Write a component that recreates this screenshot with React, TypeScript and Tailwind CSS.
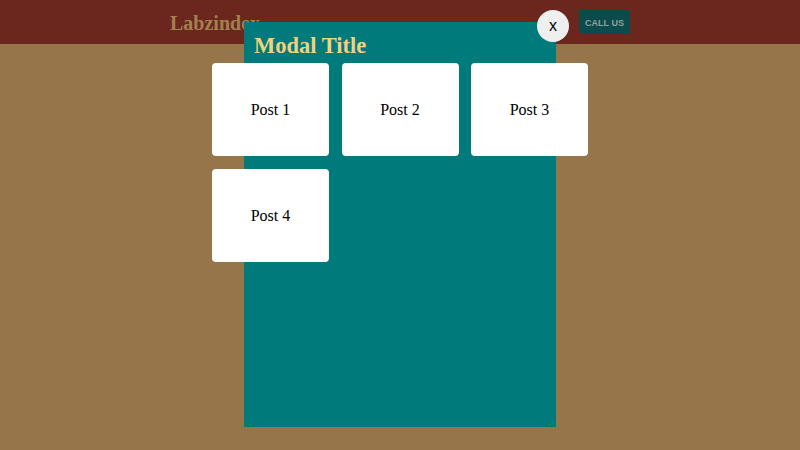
import React from "react";

export default function App() {
  const posts = ["Post 1", "Post 2", "Post 3", "Post 4"];
  return (
    <div className="relative w-[800px] h-[450px] overflow-hidden bg-[#957549]" style={{ fontFamily: '"Liberation Serif", serif' }}>
      <header className="h-[44px] bg-[#6b271e] flex items-center justify-between px-[170px]">
        <div className="text-[20px] font-bold text-[#a3804f] leading-none mt-[2px]">Labzindex</div>
        <button className="h-[24px] w-[51px] bg-[#0c4b4b] rounded-[2px] text-[9px] font-bold text-[#8ea0a0] leading-none flex items-center justify-center pt-[2px]" style={{ fontFamily: '"Liberation Sans", sans-serif' }}>
          CALL US
        </button>
      </header>
      <div className="absolute inset-0">
        <div className="absolute left-[244px] top-[22px] w-[312px] h-[405px] bg-[#007a7a] flex flex-col">
          <button className="absolute right-[-13px] top-[-12px] w-[32px] h-[32px] rounded-full bg-[#efefef] text-black text-[16px] leading-none flex items-center justify-center" style={{ fontFamily: '"Liberation Sans", sans-serif' }}>
            x
          </button>
          <h2 className="px-[10px] pt-[11px] text-[22.5px] font-bold leading-[26px] text-[#f0d27f]">Modal Title</h2>
          <div className="flex justify-center mt-[4px]">
            <div className="grid grid-cols-[117px_117px_117px] gap-x-[12.5px] gap-y-[13px] w-[376px] shrink-0">
              {posts.map((p) => (
                <div key={p} className="h-[93px] bg-white rounded-[4px] flex items-center justify-center text-[16px] text-black pt-[1px]">
                  {p}
                </div>
              ))}
            </div>
          </div>
        </div>
      </div>
    </div>
  );
}
